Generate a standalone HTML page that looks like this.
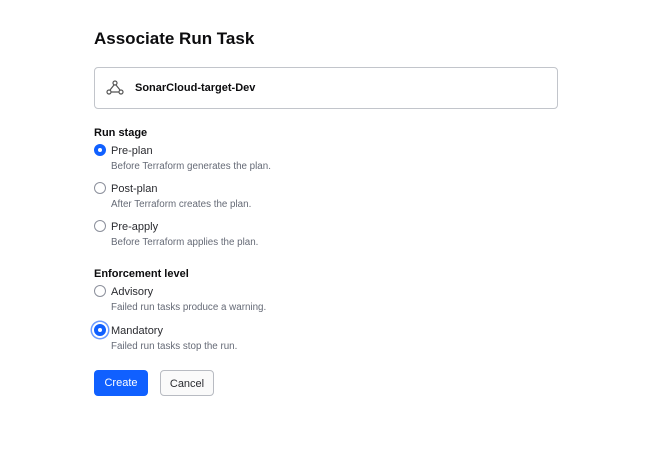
<!DOCTYPE html>
<html><head><style>
body{margin:0;width:649px;height:455px;background:#fff;font-family:"Liberation Sans",sans-serif;color:#0c0c0e;position:relative;overflow:hidden}
.a{position:absolute}
h1{position:absolute;left:94px;top:29px;margin:0;font-size:17px;font-weight:bold}
.box{left:94px;top:67px;width:462px;height:40px;border:1px solid #c2c5cb;border-radius:4px}
.lbl{font-size:11px;font-weight:bold}
.r{width:10px;height:10px;border:1px solid #8c909c;border-radius:50%;background:#fff}
.r.on{border:1px solid #1060ff;background:#1060ff}
.r.on:after{content:"";position:absolute;left:3px;top:3px;width:4px;height:4px;background:#fff;border-radius:50%}
.t{font-size:11px;color:#2a2b30}
.d{font-size:9.8px;color:#656a76}
.btn{top:370px;height:26px;border-radius:4px;font-size:11px;text-align:center;line-height:27px;box-sizing:border-box}
</style></head><body>
<h1>Associate Run Task</h1>
<div class="a box"></div>
<svg class="a" style="left:106px;top:79px" width="18" height="17" viewBox="0 0 18 17" fill="none" stroke="#555" stroke-width="1.2"><circle cx="9" cy="4" r="2"/><circle cx="3" cy="13" r="2"/><circle cx="15" cy="13" r="2"/><path d="M8 6 L4 11 M10 6 L14 11 M5 13 H13"/></svg>
<div class="a" style="left:135px;top:82px;font-size:11px;font-weight:bold">SonarCloud-target-Dev</div>
<div class="a lbl" style="left:94px;top:127px">Run stage</div>
<div class="a r on" style="left:94px;top:144px"></div>
<div class="a t" style="left:111px;top:145px">Pre-plan</div>
<div class="a d" style="left:111px;top:161px">Before Terraform generates the plan.</div>
<div class="a r" style="left:94px;top:182px"></div>
<div class="a t" style="left:111px;top:183px">Post-plan</div>
<div class="a d" style="left:111px;top:199px">After Terraform creates the plan.</div>
<div class="a r" style="left:94px;top:220px"></div>
<div class="a t" style="left:111px;top:221px">Pre-apply</div>
<div class="a d" style="left:111px;top:237px">Before Terraform applies the plan.</div>
<div class="a lbl" style="left:94px;top:268px">Enforcement level</div>
<div class="a r" style="left:94px;top:285px"></div>
<div class="a t" style="left:111px;top:286px">Advisory</div>
<div class="a d" style="left:111px;top:302px">Failed run tasks produce a warning.</div>
<div class="a r on" style="left:94px;top:324px;box-shadow:0 0 0 2px #fff,0 0 0 3.5px #6c9bff"></div>
<div class="a t" style="left:111px;top:325px">Mandatory</div>
<div class="a d" style="left:111px;top:341px">Failed run tasks stop the run.</div>
<div class="a btn" style="left:94px;width:54px;background:#1060ff;color:#fff">Create</div>
<div class="a btn" style="left:160px;width:54px;border:1px solid #b8bbc2;background:#fafafa;color:#2a2b30">Cancel</div>
</body></html>
